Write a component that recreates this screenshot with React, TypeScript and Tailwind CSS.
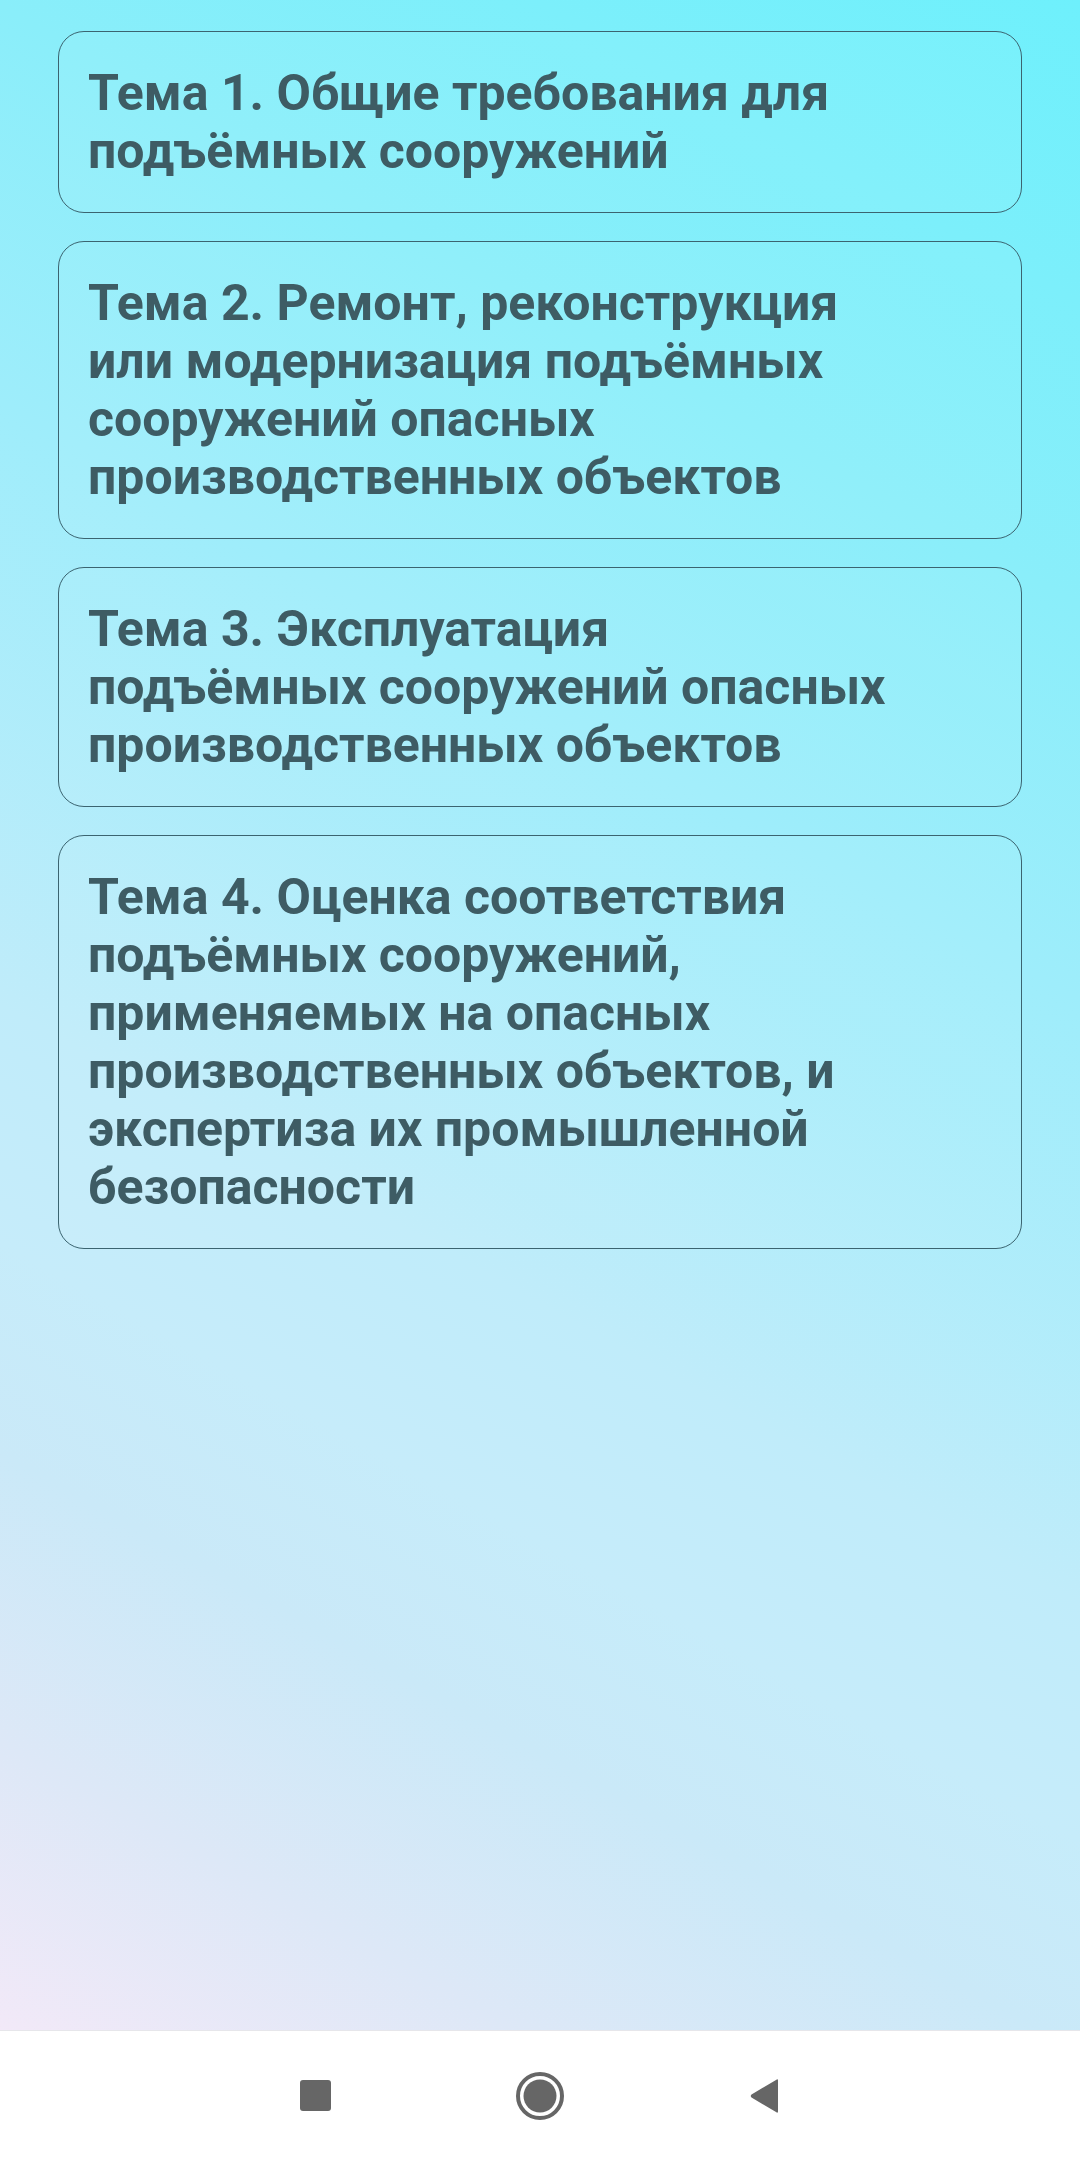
import React from 'react';

const topics = [
  'Тема 1. Общие требования для подъёмных сооружений',
  'Тема 2. Ремонт, реконструкция или модернизация подъёмных сооружений опасных производственных объектов',
  'Тема 3. Эксплуатация подъёмных сооружений опасных производственных объектов',
  'Тема 4. Оценка соответствия подъёмных сооружений, применяемых на опасных производственных объектов, и экспертиза их промышленной безопасности',
];

export default function App() {
  return (
    <div className="flex h-[2160px] w-[1080px] flex-col font-['Roboto',sans-serif]">
      <div className="flex-1 bg-[linear-gradient(209deg,#6ef0fc_0%,#8aeefa_23%,#9eedfb_38%,#c0ecfa_61%,#c6ecfa_70%,#cae9f8_78%,#dde8f7_89%,#f2e9f8_100%)] px-[58px] pt-[31px]">
        <div className="flex flex-col gap-[28px]">
          {topics.map((t) => (
            <div
              key={t}
              className="rounded-[26px] border border-[#3b6470] bg-white/5 py-8 pl-[29px] pr-[128px]"
            >
              <p className="text-[50px] font-bold leading-[58px] text-[#3e5c64]">{t}</p>
            </div>
          ))}
        </div>
      </div>

      {/* системная навигация */}
      <div className="flex h-[130px] items-center justify-center gap-[185px] border-t border-[#e6e6ea] bg-white">
        <div className="h-[31px] w-[31px] rounded-[3px] bg-[#666666]" />
        <svg width="48" height="48" viewBox="0 0 48 48">
          <circle cx="24" cy="24" r="22" fill="none" stroke="#666666" strokeWidth="4" />
          <circle cx="24" cy="24" r="16.5" fill="#666666" />
        </svg>
        <svg width="31" height="36" viewBox="0 0 31 36">
          <path d="M29 2.5 L29 33.5 Q29 35.5 27 34 L2.5 19.5 Q1 18 2.5 16.5 L27 2 Q29 0.5 29 2.5 Z" fill="#666666" />
        </svg>
      </div>
    </div>
  );
}
